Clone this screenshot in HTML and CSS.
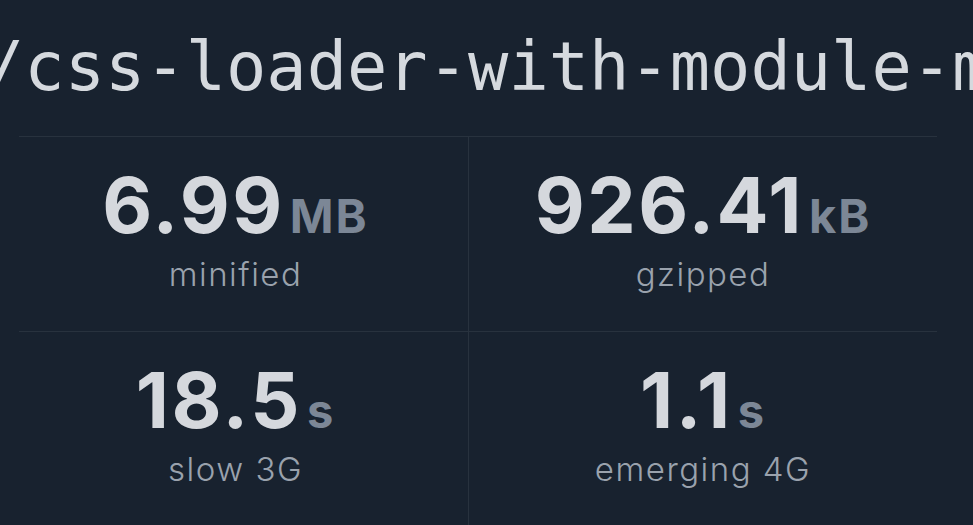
FILE: index.html
```html
<!DOCTYPE html>
<html lang="en">
<head>
<meta charset="utf-8">
<title>css-loader-with-module-mode</title>
<link rel="stylesheet" href="styles.css">
</head>
<body>
<main class="page">
  <h1 class="package-name">/css-loader-with-module-mode</h1>
  <section class="stats">
    <div class="stat stat--left">
      <div class="stat__value"><span class="stat__num">6.99</span><span class="stat__unit">MB</span></div>
      <div class="stat__label">minified</div>
    </div>
    <div class="stat">
      <div class="stat__value"><span class="stat__num">926.41</span><span class="stat__unit">kB</span></div>
      <div class="stat__label">gzipped</div>
    </div>
    <div class="stat stat--left">
      <div class="stat__value"><span class="stat__num">18.5</span><span class="stat__unit">s</span></div>
      <div class="stat__label">slow 3G</div>
    </div>
    <div class="stat">
      <div class="stat__value"><span class="stat__num">1.1</span><span class="stat__unit">s</span></div>
      <div class="stat__label">emerging 4G</div>
    </div>
  </section>
</main>
</body>
</html>
```
FILE: styles.css
```css
html, body {
  margin: 0;
  padding: 0;
  background: #18222f;
  overflow: hidden;
}

.page {
  width: 973px;
  height: 525px;
  overflow: hidden;
}

.package-name {
  margin: 0 0 0 -16px;
  height: 136px;
  padding-top: 34px;
  box-sizing: border-box;
  font-family: "DejaVu Sans Mono", "Liberation Mono", monospace;
  font-weight: 400;
  font-size: 67px;
  line-height: 1;
  color: #d5d9de;
  white-space: nowrap;
}

.stats {
  display: grid;
  grid-template-columns: 450px 468px;
  grid-auto-rows: 195px;
  margin-left: 19px;
}

.stat {
  border-top: 1px solid #28323e;
  display: flex;
  flex-direction: column;
  align-items: center;
  padding-top: 30px;
  box-sizing: border-box;
  font-family: "Inter", "Noto Sans", sans-serif;
}

.stat--left {
  border-right: 1px solid #28323e;
  padding-right: 16px;
}

.stat__value {
  line-height: 1;
  white-space: nowrap;
}

.stat__num {
  font-size: 77px;
  font-weight: 700;
  color: #d5d8dd;
  letter-spacing: 2.5px;
}

.stat__unit {
  font-size: 47px;
  font-weight: 700;
  color: #7c8796;
  letter-spacing: 2px;
  margin-left: 5px;
}

.stat__label {
  margin-top: 14px;
  font-size: 33px;
  font-weight: 300;
  line-height: 1;
  color: #9aa2ad;
  letter-spacing: 1.5px;
}
```
